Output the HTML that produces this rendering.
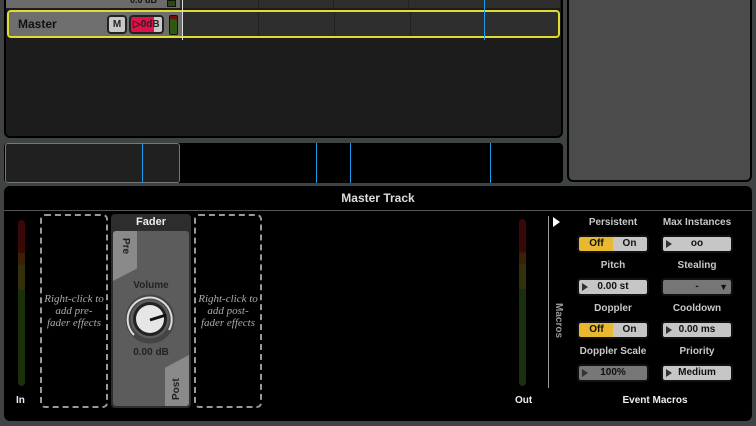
<!DOCTYPE html><html><head><style>
*{box-sizing:border-box;margin:0;padding:0}
body{width:756px;height:426px;background:#404343;position:relative;overflow:hidden;font-family:"Liberation Sans",sans-serif;font-weight:bold;}
.a{position:absolute}
.lbl{color:#c8c8c8;font-size:10px;text-align:center;position:absolute}
.btn{position:absolute;height:18px;border:2px solid #111;border-radius:4px;background:#c6c6c6;font-size:10px;color:#111;text-align:center;line-height:14px}
.tri{position:absolute;left:3px;top:3px;width:0;height:0;border-left:6px solid #333;border-top:4px solid transparent;border-bottom:4px solid transparent}
.meter{position:absolute;width:7px;border-radius:4px;background:linear-gradient(#3a0808 0,#3a0808 20%,#3a2208 20%,#3a2208 27%,#33300c 27%,#33300c 42%,#1a300c 42%,#1a300c 100%)}
.dash{position:absolute;border:2px dashed #999;border-radius:5px;color:#aaa;font-family:"Liberation Serif",serif;font-style:italic;font-weight:normal;font-size:11px;text-align:center;line-height:12px;padding:77px 2px 0}
</style></head><body>
<div class="a" style="left:4px;top:-6px;width:559px;height:144px;background:#1c1c1c;border:2px solid #000;border-radius:6px"></div>
<div class="a" style="left:6px;top:0;width:554px;height:8px;background:#2e2e2e"></div>
<div class="a" style="left:6px;top:0;width:174px;height:8px;background:#6b6b6b"></div>
<div class="a" style="left:130px;top:-5px;font-size:9px;color:#111">0.0 dB</div>
<div class="a" style="left:167px;top:0;width:9px;height:7px;background:#2a4a10;border:1px solid #111"></div>
<div class="a" style="left:7px;top:10px;width:553px;height:28px;background:#2e2e2e;border:2px solid #e0dc30;border-radius:4px;overflow:hidden">
 <div class="a" style="left:0;top:0;width:173px;height:24px;background:#6e6e6e"></div>
 <div class="a" style="left:9px;top:5px;font-size:12px;color:#111">Master</div>
 <div class="a" style="left:98px;top:3px;width:20px;height:19px;background:#c8c8c8;border:2px solid #222;border-radius:4px;font-size:10px;text-align:center;line-height:15px;color:#222">M</div>
 <div class="a" style="left:120px;top:3px;width:35px;height:19px;background:linear-gradient(90deg,#e0104a 75%,#c8c8c8 75%);border:2px solid #222;border-radius:4px;font-size:10px;line-height:15px;color:#222;padding-left:2px">▷0dB</div>
 <div class="a" style="left:160px;top:3px;width:9px;height:20px;background:linear-gradient(#6a1010 20%,#2e5a10 20%);border:1px solid #111;border-radius:2px"></div>
 <div class="a" style="left:249px;top:0;width:1px;height:24px;background:#222"></div>
 <div class="a" style="left:325px;top:0;width:1px;height:24px;background:#222"></div>
 <div class="a" style="left:401px;top:0;width:1px;height:24px;background:#222"></div>
</div>
<div class="a" style="left:258px;top:0;width:1px;height:9px;background:#222"></div>
<div class="a" style="left:333px;top:0;width:1px;height:9px;background:#222"></div>
<div class="a" style="left:408px;top:0;width:1px;height:9px;background:#222"></div>
<div class="a" style="left:182px;top:0;width:1px;height:40px;background:#ddd"></div>
<div class="a" style="left:484px;top:0;width:1px;height:40px;background:#1e9be8"></div>
<div class="a" style="left:4px;top:143px;width:559px;height:40px;background:#000;border-radius:4px"></div>
<div class="a" style="left:5px;top:143px;width:175px;height:40px;background:#202020;border:1px solid #777;border-radius:3px"></div>
<div class="a" style="left:142px;top:143px;width:1px;height:40px;background:#1e9be8"></div>
<div class="a" style="left:316px;top:143px;width:1px;height:40px;background:#1e9be8"></div>
<div class="a" style="left:350px;top:143px;width:1px;height:40px;background:#1e9be8"></div>
<div class="a" style="left:490px;top:143px;width:1px;height:40px;background:#1e9be8"></div>
<div class="a" style="left:567px;top:-6px;width:185px;height:188px;background:#4b4b4b;border:2px solid #000;border-radius:6px"></div>
<div class="a" style="left:4px;top:186px;width:748px;height:235px;background:#000;border-radius:6px"></div>
<div class="a" style="left:4px;top:191px;width:748px;text-align:center;font-size:12px;color:#ddd">Master Track</div>
<div class="a" style="left:4px;top:210px;width:748px;height:1px;background:#555"></div>
<div class="meter" style="left:18px;top:220px;height:166px"></div>
<div class="a" style="left:16px;top:395px;font-size:10px;color:#eee">In</div>
<div class="dash" style="left:40px;top:214px;width:68px;height:194px">Right-click to add pre-fader effects</div>
<div class="a" style="left:111px;top:214px;width:80px;height:194px;background:#2d2d2d;border-radius:4px">
 <div class="a" style="left:0;top:2px;width:80px;text-align:center;font-size:11px;color:#eee">Fader</div>
 <div class="a" style="left:2px;top:17px;width:76px;height:175px;background:#5c5c5c;border-radius:3px;overflow:hidden">
  <div class="a" style="left:0;top:0;width:24px;height:50px;background:#8a8a8a;clip-path:polygon(0 0,100% 0,100% 75%,0 100%)"></div>
  <div class="a" style="top:7px;font-size:10px;color:#222;transform:rotate(90deg);transform-origin:left top;left:18px">Pre</div>
  <div class="a" style="left:52px;top:124px;width:24px;height:51px;background:#8a8a8a;clip-path:polygon(0 25%,100% 0,100% 100%,0 100%)"></div>
  <div class="a" style="left:58px;top:169px;font-size:10px;color:#222;transform:rotate(-90deg);transform-origin:left top">Post</div>
  <div class="a" style="left:0;top:49px;width:76px;text-align:center;font-size:10px;color:#222">Volume</div>
  <svg class="a" style="left:11px;top:62px" width="52" height="52" viewBox="0 0 52 52">
   <circle cx="26" cy="26" r="22" fill="none" stroke="#444" stroke-width="5"/>
   <path d="M10 42 A22 22 0 1 1 45 37" fill="none" stroke="#ddd" stroke-width="2"/>
   <circle cx="26" cy="26" r="17" fill="#222"/>
   <circle cx="26" cy="26" r="14" fill="#e6e6e6"/>
   <line x1="26" y1="27" x2="42" y2="22" stroke="#111" stroke-width="3"/>
  </svg>
  <div class="a" style="left:0;top:116px;width:76px;text-align:center;font-size:10px;color:#222">0.00 dB</div>
 </div>
</div>
<div class="dash" style="left:194px;top:214px;width:68px;height:194px">Right-click to add post-fader effects</div>
<div class="meter" style="left:519px;top:219px;height:167px"></div>
<div class="a" style="left:515px;top:395px;font-size:10px;color:#eee">Out</div>
<div class="a" style="left:548px;top:216px;width:1px;height:172px;background:#999"></div>
<div class="a" style="left:553px;top:217px;border-left:7px solid #fff;border-top:5px solid transparent;border-bottom:5px solid transparent"></div>
<div class="a" style="top:303px;font-size:10px;color:#999;transform:rotate(90deg);transform-origin:left top;left:564px">Macros</div>
<div class="lbl" style="left:578px;top:217px;width:70px">Persistent</div>
<div class="lbl" style="left:660px;top:217px;width:74px">Max Instances</div>
<div class="btn" style="left:577px;top:235px;width:72px;background:linear-gradient(90deg,#e8b830 50%,#c6c6c6 50%)"><span style="display:inline-block;width:33px">Off</span><span style="display:inline-block;width:33px">On</span></div>
<div class="btn" style="left:661px;top:235px;width:72px"><i class="tri"></i>oo</div>
<div class="lbl" style="left:578px;top:260px;width:70px">Pitch</div>
<div class="lbl" style="left:660px;top:260px;width:74px">Stealing</div>
<div class="btn" style="left:577px;top:278px;width:72px"><i class="tri"></i>0.00 st</div>
<div class="btn" style="left:661px;top:278px;width:72px;background:#777">-<span style="position:absolute;right:3px;font-size:9px">▼</span></div>
<div class="lbl" style="left:578px;top:303px;width:70px">Doppler</div>
<div class="lbl" style="left:660px;top:303px;width:74px">Cooldown</div>
<div class="btn" style="left:577px;top:321px;width:72px;background:linear-gradient(90deg,#e8b830 50%,#c6c6c6 50%)"><span style="display:inline-block;width:33px">Off</span><span style="display:inline-block;width:33px">On</span></div>
<div class="btn" style="left:661px;top:321px;width:72px"><i class="tri"></i>0.00 ms</div>
<div class="lbl" style="left:575px;top:346px;width:76px">Doppler Scale</div>
<div class="lbl" style="left:660px;top:346px;width:74px">Priority</div>
<div class="btn" style="left:577px;top:364px;width:72px;background:#777"><i class="tri"></i>100%</div>
<div class="btn" style="left:661px;top:364px;width:72px"><i class="tri"></i>Medium</div>
<div class="a" style="top:395px;width:180px;text-align:center;font-size:10px;color:#eee;left:565px">Event Macros</div>
</body></html>
